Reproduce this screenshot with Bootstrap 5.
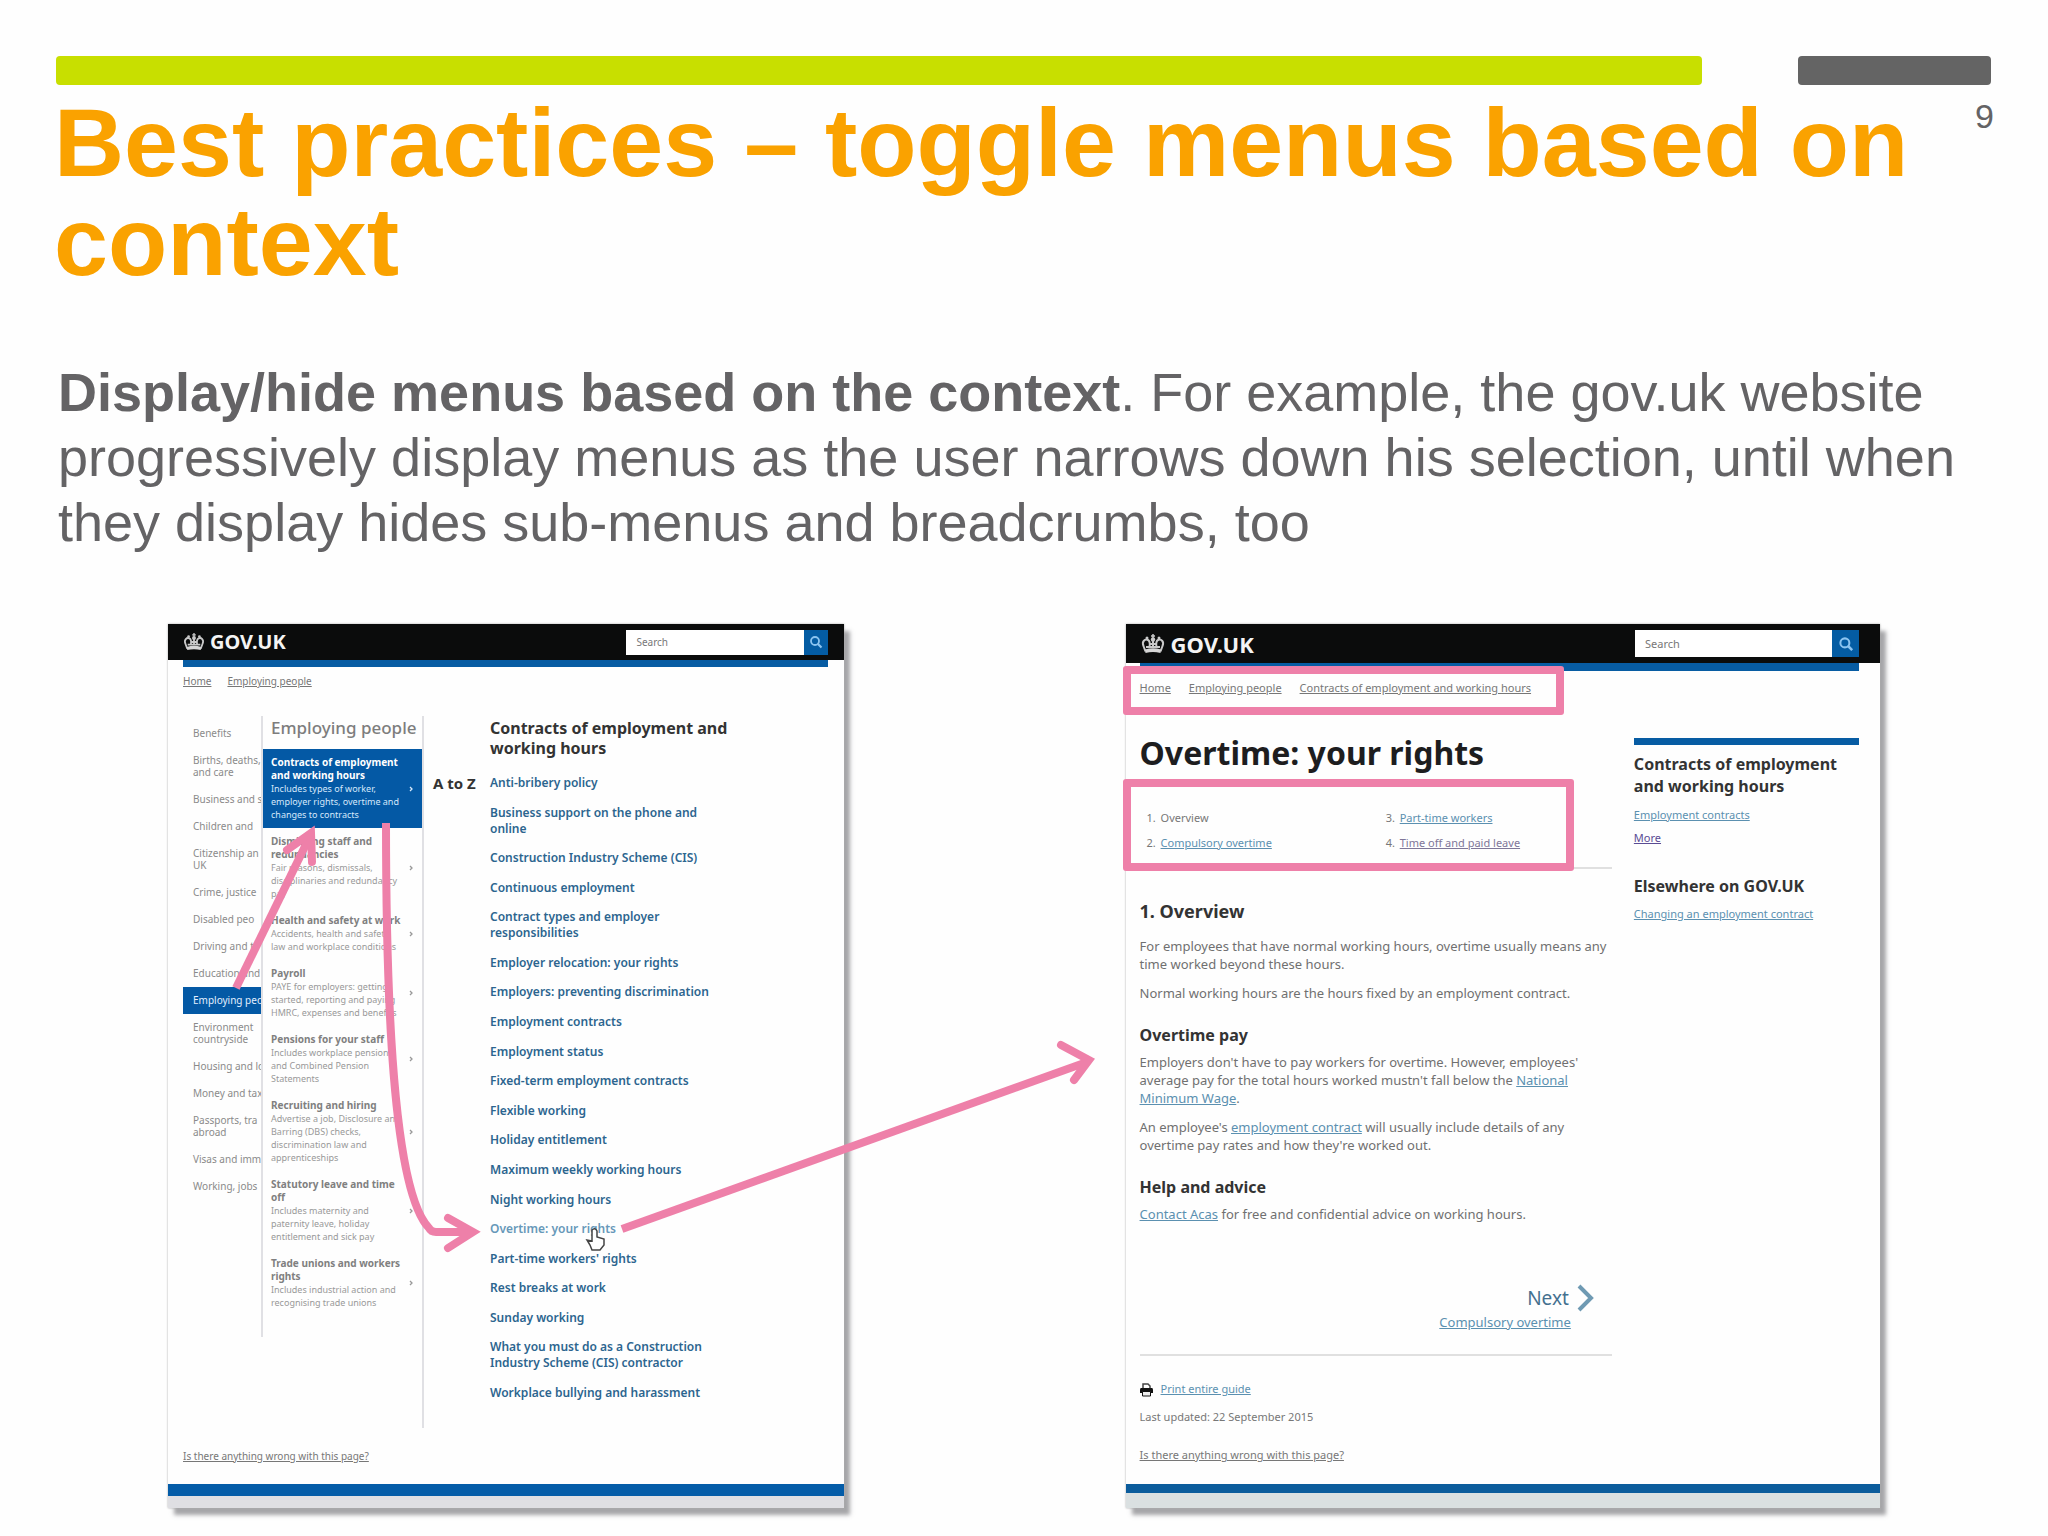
<!DOCTYPE html>
<html lang="en">
<head>
<meta charset="utf-8">
<meta name="viewport" content="width=device-width, initial-scale=1">
<title>Best practices – toggle menus based on context</title>
<link href="https://cdn.jsdelivr.net/npm/bootstrap@5.3.0/dist/css/bootstrap.min.css" rel="stylesheet">
<style>
body { font-family: "Liberation Sans", Arial, sans-serif; background: #fefefe; color: #646365; }
.slide { padding-bottom: 28px; }
.bars { padding: 56px 57px 0 56px; }
.bar-green { height: 29px; background: #c8df00; border-radius: 4px; flex: 1646 1 0; }
.bar-gap { flex: 96 1 0; }
.bar-grey { height: 29px; background: #646464; border-radius: 4px; flex: 193 1 0; }
.title-row { padding: 8px 54px 0 54px; }
.title-row h1 { font-size: 97px; line-height: 99px; font-weight: 700; color: #faa200; }
.page-no { font-size: 34px; line-height: 34px; padding-top: 6px; }
.intro { font-size: 54px; line-height: 65px; padding: 69px 58px; }
.shots { display: grid; grid-template-columns: 676fr 281fr 754fr; padding: 0 168px; }
.shots > :last-child { grid-column: 3; }
.shot { font-family: "Noto Sans", "Open Sans", sans-serif; font-size: 10px; line-height: 14px; background: #fefefe; color: #777; box-shadow: 0 0 2px #aaa, 6px 7px 4px rgba(80,80,85,.5); white-space: nowrap; }
.shot ul, .shot ol { list-style: none; padding: 0; margin: 0; }
.shot h2, .shot h3, .shot p { margin: 0; }
.gov-top { background: #0b0c0c; height: 36px; padding: 0 16px 0 15px; }
.gov-name { color: #f4f4f4; font-weight: 700; font-size: 20px; line-height: 26px; text-decoration: none; gap: 5px; }
.search-box { width: 178px; height: 25px; border: 0; padding: 0 10px; font-size: 10px; background: #fff; color: #666; }
.search-box::placeholder { color: #777; }
.search-btn { width: 24px; height: 25px; border: 0; padding: 0; background: #045ca3; line-height: 0; }
.blue-bar { height: 7px; background: #075ca3; margin: 0 16px 0 15px; }
.crumbs { padding: 7px 15px 0; gap: 16px; }
.crumbs a, .grey-link { color: #777; text-decoration: underline; }
.menus { margin: 28px 0 0 15px; min-height: 712px; }
.menu-a { width: 80px; border-right: 2px solid #e0e0e4; padding-top: 4px; height: 621px; overflow: hidden; }
.menu-a a { display: block; padding: 7px 0 8px 10px; line-height: 12px; color: #8a8a8a; text-decoration: none; }
.menu-a a.on { background: #0459a5; color: #e3efff; }
.menu-b { width: 161px; border-right: 2px solid #e0e0e4; }
.menu-b h2 { font-size: 17px; line-height: 24px; font-weight: 500; color: #7d7d7d; padding: 0 0 9px 8px; height: 33px; }
.menu-b a { display: flex; align-items: center; justify-content: space-between; padding: 7px 8px; font-size: 9px; line-height: 13px; color: #999; text-decoration: none; }
.menu-b strong { display: block; font-size: 10px; color: #808080; }
.menu-b a.on { background: #0459a5; color: #d6e8fb; }
.menu-b a.on strong { color: #fff; }
.az { width: 66px; padding: 57px 0 0 9px; font-size: 15px; line-height: 20px; font-weight: 700; color: #333; }
.menu-c { padding: 2px 0 27px; }
.menu-c h2 { font-size: 16px; line-height: 20px; font-weight: 700; color: #333; }
.menu-c ul { margin-top: 17px; }
.menu-c a { display: block; font-size: 12px; line-height: 16px; font-weight: 600; color: #2c658f; text-decoration: none; }
.menu-c a.hov { color: #6798b9; }
.foot-link { padding: 21px 15px 20px; }
.strip { height: 12px; background: #045ca8; }
.base { height: 12px; background: #dfdfe3; }
/* guide page */
.guide { font-size: 11px; line-height: 16px; }
.guide .gov-top { height: 39px; padding: 0 21px 0 14px; }
.guide .gov-name { font-size: 22px; gap: 5px; }
.guide .search-box { width: 197px; height: 27px; font-size: 11px; }
.guide .search-btn { width: 27px; height: 27px; }
.guide .blue-bar { height: 8px; margin: 0 21px 0 14px; }
.guide .crumbs { margin-top: 9px; padding: 0 14px; gap: 18px; }
.hl { position: absolute; border: 8px solid #ee80a9; border-radius: 3px; pointer-events: none; }
.hl-crumbs { left: -3px; top: -14px; width: 441px; height: 49px; }
.hl-toc { left: -17px; top: -26px; width: 451px; height: 92px; }
.guide-body { padding: 0 21px 21px 14px; gap: 22px; }
.guide-main { flex: 472 1 0; }
.guide-side { flex: 225 1 0; padding-top: 42px; }
.guide h2.page-title { font-size: 32px; line-height: 40px; font-weight: 700; color: #1d1d1f; margin-top: 37px; }
.toc { margin: 32px 0 12px; line-height: 25px; padding-left: 7px; }
.toc li { display: flex; }
.toc .num { width: 14px; }
.toc ol { flex: 226 1 0; }
.toc ol:first-child { flex-grow: 239; }
.guide a { color: #5b90b0; text-decoration: underline; }
.guide a.gov-name { color: #f4f4f4; text-decoration: none; }
.guide .crumbs a, .guide a.grey-link { color: #777; }
.guide a.seen { color: #7f7799; }
.guide a.visited { color: #5a4c94; }
.rule { border: 0; border-top: 2px solid #e0e0e0; opacity: 1; margin: 0; }
.guide h3 { font-size: 16px; line-height: 22px; font-weight: 700; color: #333; }
.guide h3.part { font-size: 18px; line-height: 24px; margin: 30px 0 14px; }
.prose p { font-size: 13px; line-height: 18px; color: #707070; margin-bottom: 11px; }
.prose h3 { margin: 22px 0 7px; }
.guide a.next { padding: 50px 17px 22px 0; display: block; text-decoration: none; }
.next-word { font-size: 19px; line-height: 26px; color: #44708f; gap: 7px; }
.next-topic { font-size: 13px; line-height: 20px; padding-right: 24px; text-decoration: underline; }
.print { margin: 24px 0 11px; gap: 8px; line-height: 18px; }
.report { padding-top: 22px; }
.guide .side-h { border-top: 7px solid #075ca3; padding-top: 8px; margin-bottom: 10px; }
.guide .side-h2 { margin: 29px 0 9px; }
.more { padding-top: 7px; }
.guide .strip { height: 9px; background: #0b5c9c; }
.guide .base { height: 15px; background: #dae0e1; }
.notes { position: absolute; left: 0; top: 0; pointer-events: none; }
</style>
<script src="https://cdn.jsdelivr.net/npm/bootstrap@5.3.0/dist/js/bootstrap.bundle.min.js"></script>
</head>
<body>
<svg width="0" height="0" class="position-absolute" aria-hidden="true">
  <symbol id="crown" viewBox="0 0 24 20">
    <path fill="none" stroke="#c9c9c9" stroke-width="2" d="M4.500 17.500 L2.500 12 C.5 7.500 4 4.500 7 6 C9 7 9 10 8.500 13 M19.500 17.500 L21.500 12 C23.500 7.500 20 4.500 17 6 C15 7 15 10 15.500 13 M12 5 V14 M8.500 10 H15.500 M5 13 H19"/>
    <path fill="#d6d6d6" d="M4 15.500 Q12 13 20 15.500 L19.500 19 Q12 17 4.500 19Z"/>
    <circle cx="12" cy="5.500" r="2.200" fill="#c9c9c9"/><path stroke="#c9c9c9" stroke-width="1.500" d="M12 0V4M10 2H14"/>
    <circle cx="6" cy="4" r="1.500" fill="#c9c9c9"/><circle cx="18" cy="4" r="1.500" fill="#c9c9c9"/>
  </symbol>
  <symbol id="lens" viewBox="0 0 16 16"><circle cx="7" cy="7" r="4" fill="none" stroke="#8cc4f0" stroke-width="1.800"/><path d="M10 10L13.500 13.500" stroke="#8cc4f0" stroke-width="2.200"/></symbol>
  <symbol id="chev" viewBox="0 0 5 8"><path d="M1 2L3 4L1 6" fill="none" stroke="currentColor" stroke-width="1.300"/></symbol>
</svg>
<main class="slide position-relative">
  <div class="bars d-flex"><div class="bar-green"></div><div class="bar-gap"></div><div class="bar-grey"></div></div>
  <header class="title-row d-flex">
    <h1 class="flex-grow-1 m-0">Best practices – toggle menus based on context</h1>
    <div class="page-no">9</div>
  </header>
  <p class="intro m-0"><b>Display/hide menus based on the context</b>. For example, the gov.uk website progressively display menus as the user narrows down his selection, until when they display hides sub-menus and breadcrumbs, too</p>

  <div class="shots">
    <section class="shot d-flex flex-column" aria-label="Browse menus">
      <div class="gov-top d-flex align-items-center justify-content-between">
        <a href="#" class="gov-name d-flex align-items-center"><svg width="22" height="18"><use href="#crown"/></svg>GOV.UK</a>
        <form class="d-flex"><label class="visually-hidden" for="s1">Search</label><input id="s1" class="search-box" type="text" placeholder="Search"><button type="button" class="search-btn" aria-label="Search"><svg width="16" height="16"><use href="#lens"/></svg></button></form>
      </div>
      <div class="blue-bar"></div>
      <nav class="crumbs d-flex"><a href="#">Home</a><a href="#">Employing people</a></nav>
      <div class="menus d-flex">
        <nav class="menu-a flex-shrink-0">
          <a href="#">Benefits</a>
          <a href="#">Births, deaths,<br>and care</a>
          <a href="#">Business and s</a>
          <a href="#">Children and</a>
          <a href="#">Citizenship an<br>UK</a>
          <a href="#">Crime, justice</a>
          <a href="#">Disabled peo</a>
          <a href="#">Driving and t</a>
          <a href="#">Education and</a>
          <a href="#" class="on">Employing peo</a>
          <a href="#">Environment<br>countryside</a>
          <a href="#">Housing and lo</a>
          <a href="#">Money and tax</a>
          <a href="#">Passports, tra<br>abroad</a>
          <a href="#">Visas and imm</a>
          <a href="#">Working, jobs</a>
        </nav>
        <nav class="menu-b flex-shrink-0">
          <h2>Employing people</h2>
          <a href="#" class="on"><span><strong>Contracts of employment<br>and working hours</strong>Includes types of worker,<br>employer rights, overtime and<br>changes to contracts</span><svg width="5" height="8"><use href="#chev"/></svg></a>
          <a href="#"><span><strong>Dismissing staff and<br>redundancies</strong>Fair reasons, dismissals,<br>disciplinaries and redundancy<br>pay</span><svg width="5" height="8"><use href="#chev"/></svg></a>
          <a href="#"><span><strong>Health and safety at work</strong>Accidents, health and safety<br>law and workplace conditions</span><svg width="5" height="8"><use href="#chev"/></svg></a>
          <a href="#"><span><strong>Payroll</strong>PAYE for employers: getting<br>started, reporting and paying<br>HMRC, expenses and benefits</span><svg width="5" height="8"><use href="#chev"/></svg></a>
          <a href="#"><span><strong>Pensions for your staff</strong>Includes workplace pensions<br>and Combined Pension<br>Statements</span><svg width="5" height="8"><use href="#chev"/></svg></a>
          <a href="#"><span><strong>Recruiting and hiring</strong>Advertise a job, Disclosure and<br>Barring (DBS) checks,<br>discrimination law and<br>apprenticeships</span><svg width="5" height="8"><use href="#chev"/></svg></a>
          <a href="#"><span><strong>Statutory leave and time<br>off</strong>Includes maternity and<br>paternity leave, holiday<br>entitlement and sick pay</span><svg width="5" height="8"><use href="#chev"/></svg></a>
          <a href="#"><span><strong>Trade unions and workers<br>rights</strong>Includes industrial action and<br>recognising trade unions</span><svg width="5" height="8"><use href="#chev"/></svg></a>
        </nav>
        <div class="az flex-shrink-0">A to Z</div>
        <nav class="menu-c d-flex flex-column">
          <h2>Contracts of employment and<br>working hours</h2>
          <ul class="d-flex flex-column justify-content-between flex-grow-1">
            <li><a href="#">Anti-bribery policy</a></li>
            <li><a href="#">Business support on the phone and<br>online</a></li>
            <li><a href="#">Construction Industry Scheme (CIS)</a></li>
            <li><a href="#">Continuous employment</a></li>
            <li><a href="#">Contract types and employer<br>responsibilities</a></li>
            <li><a href="#">Employer relocation: your rights</a></li>
            <li><a href="#">Employers: preventing discrimination</a></li>
            <li><a href="#">Employment contracts</a></li>
            <li><a href="#">Employment status</a></li>
            <li><a href="#">Fixed-term employment contracts</a></li>
            <li><a href="#">Flexible working</a></li>
            <li><a href="#">Holiday entitlement</a></li>
            <li><a href="#">Maximum weekly working hours</a></li>
            <li><a href="#">Night working hours</a></li>
            <li><a href="#" class="hov">Overtime: your rights</a></li>
            <li><a href="#">Part-time workers' rights</a></li>
            <li><a href="#">Rest breaks at work</a></li>
            <li><a href="#">Sunday working</a></li>
            <li><a href="#">What you must do as a Construction<br>Industry Scheme (CIS) contractor</a></li>
            <li><a href="#">Workplace bullying and harassment</a></li>
          </ul>
        </nav>
      </div>
      <div class="foot-link"><a href="#" class="grey-link">Is there anything wrong with this page?</a></div>
      <div class="strip mt-auto"></div>
      <div class="base"></div>
    </section>

    <section class="shot guide d-flex flex-column" aria-label="Guide page">
      <div class="gov-top d-flex align-items-center justify-content-between">
        <a href="#" class="gov-name d-flex align-items-center"><svg width="26" height="20"><use href="#crown"/></svg>GOV.UK</a>
        <form class="d-flex"><label class="visually-hidden" for="s2">Search</label><input id="s2" class="search-box" type="text" placeholder="Search"><button type="button" class="search-btn" aria-label="Search"><svg width="18" height="18"><use href="#lens"/></svg></button></form>
      </div>
      <div class="blue-bar"></div>
      <nav class="crumbs d-flex position-relative"><a href="#">Home</a><a href="#">Employing people</a><a href="#">Contracts of employment and working hours</a><span class="hl hl-crumbs"></span></nav>
      <div class="guide-body d-flex">
        <article class="guide-main">
          <h2 class="page-title">Overtime: your rights</h2>
          <div class="toc d-flex position-relative">
            <ol><li><span class="num">1.</span>Overview</li><li><span class="num">2.</span><a href="#">Compulsory overtime</a></li></ol>
            <ol><li><span class="num">3.</span><a href="#">Part-time workers</a></li><li><span class="num">4.</span><a href="#" class="seen">Time off and paid leave</a></li></ol>
            <span class="hl hl-toc"></span>
          </div>
          <hr class="rule">
          <div class="prose">
            <h3 class="part">1. Overview</h3>
            <p>For employees that have normal working hours, overtime usually means any<br>time worked beyond these hours.</p>
            <p>Normal working hours are the hours fixed by an employment contract.</p>
            <h3>Overtime pay</h3>
            <p>Employers don't have to pay workers for overtime. However, employees'<br>average pay for the total hours worked mustn't fall below the <a href="#">National<br>Minimum Wage</a>.</p>
            <p>An employee's <a href="#">employment contract</a> will usually include details of any<br>overtime pay rates and how they're worked out.</p>
            <h3>Help and advice</h3>
            <p><a href="#">Contact Acas</a> for free and confidential advice on working hours.</p>
          </div>
          <a href="#" class="next">
            <span class="next-word d-flex justify-content-end align-items-center">Next<svg width="19" height="28" viewBox="0 0 19 28"><path d="M3 2L15 14L3 26" fill="none" stroke="#6f9ab3" stroke-width="4"/></svg></span>
            <span class="next-topic d-block text-end">Compulsory overtime</span>
          </a>
          <hr class="rule">
          <div class="print d-flex align-items-center"><svg width="13" height="15" viewBox="0 0 13 15"><path d="M3 6V2H8L10 4V6" fill="none" stroke="#444" stroke-width="1.500"/><path d="M1 6H12Q13 6 13 8V11H0V8Q0 6 1 6Z" fill="#111"/><path d="M2.500 9.500H10.500V14H2.500Z" fill="#eee" stroke="#111"/></svg><a href="#">Print entire guide</a></div>
          <p>Last updated: 22 September 2015</p>
          <p class="report"><a href="#" class="grey-link">Is there anything wrong with this page?</a></p>
        </article>
        <aside class="guide-side">
          <h3 class="side-h">Contracts of employment<br>and working hours</h3>
          <p><a href="#">Employment contracts</a></p>
          <p class="more"><a href="#" class="visited">More</a></p>
          <h3 class="side-h2">Elsewhere on GOV.UK</h3>
          <p><a href="#">Changing an employment contract</a></p>
        </aside>
      </div>
      <div class="strip mt-auto"></div>
      <div class="base"></div>
    </section>
  </div>

  <!-- hand-drawn arrows and the pointer over both pages -->
  <svg class="notes" width="2048" height="1536" viewBox="0 0 2048 1536" aria-hidden="true">
    <g fill="none" stroke="#ee80a9" stroke-width="8">
      <path d="M236 988L311 834"/>
      <path d="M386 823C386 990 392 1190 429 1228Q431 1232 436 1232H472"/>
      <path d="M622 1229L1087 1062"/>
      <g stroke-linecap="round" stroke-linejoin="miter">
        <path d="M287 850L311 833L312 862"/>
        <path d="M448 1218L473 1232L448 1248"/>
        <path d="M1061 1045L1089 1060L1074 1080"/>
      </g>
    </g>
    <path d="M592 1230Q595 1227 597 1231V1237L604 1239V1245L600 1250H592L590 1245L587 1240L592 1241Z" fill="#fff" stroke="#444" stroke-width="1.500"/>
  </svg>
</main>
</body>
</html>
